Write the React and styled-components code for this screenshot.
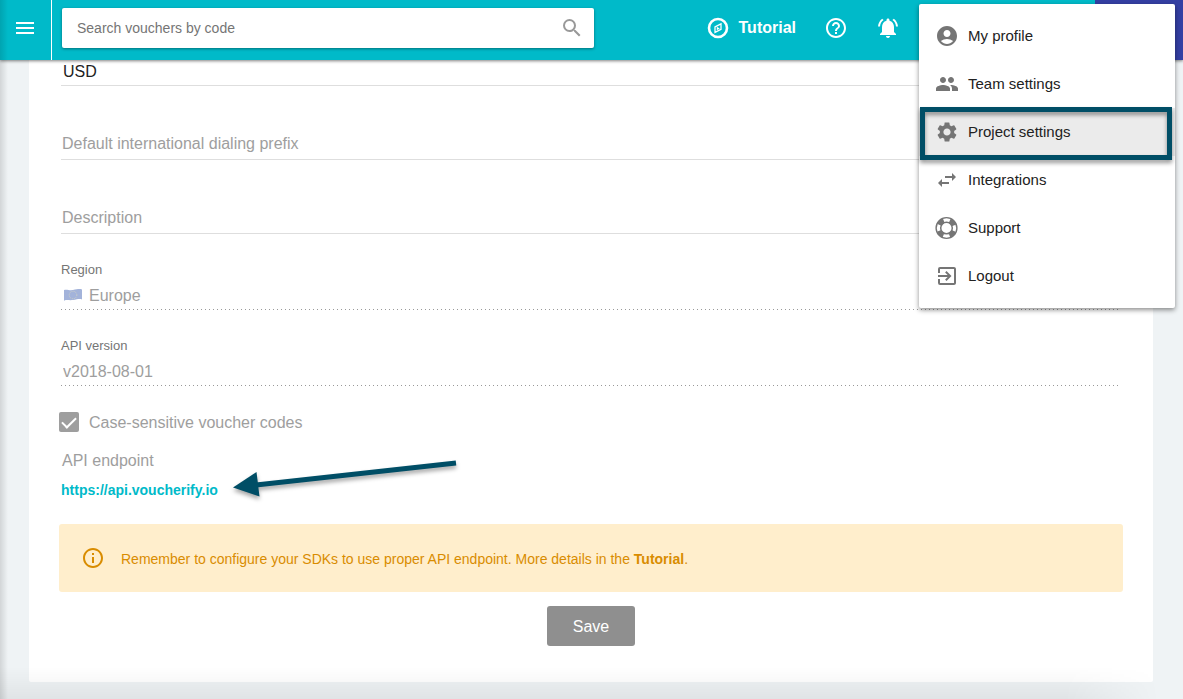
import React from 'react'
import styled, { createGlobalStyle } from 'styled-components'
import {
  MdMenu,
  MdSearch,
  MdHelpOutline,
  MdNotificationsActive,
  MdAccountCircle,
  MdPeople,
  MdSettings,
  MdSwapHoriz,
  MdExitToApp,
  MdInfoOutline,
} from 'react-icons/md'

const Colors = {
  TEAL: '#00bac9',
  INDIGO: '#343fa3',
  NAVY: '#004e66',
  PAGE: '#eff3f5',
  TEXT: '#222',
  MUTED: '#9e9e9e',
  LABEL: '#757575',
  LINE: '#dedede',
  AMBER: '#d98c00',
  AMBER_LIGHT: '#ffeecc',
}

const menuItems = [
  { label: 'My profile', icon: MdAccountCircle },
  { label: 'Team settings', icon: MdPeople },
  { label: 'Project settings', icon: MdSettings, active: true },
  { label: 'Integrations', icon: MdSwapHoriz },
  { label: 'Support', icon: LifeRing },
  { label: 'Logout', icon: MdExitToApp },
]

function LifeRing() {
  return (
    <svg width="24" height="24" viewBox="0 0 24 24" fill="none" stroke="currentColor" aria-hidden="true">
      <circle cx="11.500" cy="12" r="10.400" strokeWidth="1.400" />
      <circle cx="11.500" cy="12" r="5.800" strokeWidth="1.500" />
      <circle cx="11.500" cy="12" r="8" strokeWidth="5" strokeDasharray="6.400 6.166" strokeDashoffset="-3.083" />
    </svg>
  )
}

const Compass = () => (
  <svg width="22" height="22" viewBox="0 0 22 22" fill="none" stroke="currentColor" aria-hidden="true">
    <circle cx="11" cy="11" r="9" strokeWidth="2.600" />
    <path d="M14 6.800v5.600l-6 3V9.800z" strokeWidth="1.300" />
    <path d="M9.800 9.800l3 1.600-3 1.800z" fill="currentColor" stroke="none" />
  </svg>
)

const EuropeFlag = () => (
  <FlagSvg width="20" height="14" viewBox="0 0 20 14" aria-hidden="true">
    <path d="M1 2c3-1 5 .6 9 0s6-1.400 9-.6v10c-3-.8-5 .2-9 .7s-6-.6-9 .6z" fill="#a3b3da" />
    <circle cx="10" cy="7" r="3.800" fill="none" stroke="#cfd2c8" strokeWidth="1" strokeDasharray="1 1" />
  </FlagSvg>
)

const PointerArrow = () => (
  <ArrowSvg width="230" height="46" viewBox="0 0 230 46" aria-hidden="true">
    <path d="M24 27L224 5" stroke={Colors.NAVY} strokeWidth="5" />
    <path d="M1 29.500L24.500 14l3 24.500z" fill={Colors.NAVY} />
  </ArrowSvg>
)

const App = () => {
  return (
    <Page>
      <GlobalStyle />
      <Header>
        <MenuButton aria-label="Open menu"><MdMenu size={24} /></MenuButton>
        <SearchBox>
          <SearchInput type="text" placeholder="Search vouchers by code" aria-label="Search vouchers by code" />
          <MdSearch size={24} />
        </SearchBox>
        <Actions>
          <TutorialLink href="#tutorial"><Compass />Tutorial</TutorialLink>
          <IconButton aria-label="Help"><MdHelpOutline size={24} /></IconButton>
          <IconButton aria-label="Notifications"><MdNotificationsActive size={24} /></IconButton>
        </Actions>
        <AccountBlock />
      </Header>

      <Card>
        <Field $height={26}>
          <FieldInput id="currency" type="text" aria-label="Currency" defaultValue="USD" />
        </Field>
        <Field $height={74}>
          <FieldInput id="prefix" type="text" placeholder="Default international dialing prefix" aria-label="Default international dialing prefix" />
        </Field>
        <Field $height={74}>
          <FieldInput id="description" type="text" placeholder="Description" aria-label="Description" />
        </Field>
        <Field $height={76} $dotted>
          <FieldLabel htmlFor="region">Region</FieldLabel>
          <FieldValue>
            <EuropeFlag />
            <FieldInput id="region" type="text" defaultValue="Europe" disabled />
          </FieldValue>
        </Field>
        <Field $height={76} $dotted>
          <FieldLabel htmlFor="version">API version</FieldLabel>
          <FieldValue>
            <FieldInput id="version" type="text" defaultValue="v2018-08-01" disabled />
          </FieldValue>
        </Field>

        <CheckRow>
          <Checkbox type="checkbox" defaultChecked disabled />
          Case-sensitive voucher codes
        </CheckRow>
        <EndpointTitle>API endpoint</EndpointTitle>
        <EndpointRow>
          <EndpointLink href="https://api.voucherify.io">https://api.voucherify.io</EndpointLink>
          <PointerArrow />
        </EndpointRow>

        <Notice>
          <MdInfoOutline size={24} />
          <p>
            Remember to configure your SDKs to use proper API endpoint. More details in the <a href="#tutorial">Tutorial</a>.
          </p>
        </Notice>
        <SaveButton type="button">Save</SaveButton>
      </Card>

      <Menu>
        {menuItems.map(({ label, icon: Icon, active }) => (
          <MenuItem key={label} $active={active}>
            <Icon size={24} />
            <MenuLabel>{label}</MenuLabel>
            {active && <Highlight />}
          </MenuItem>
        ))}
      </Menu>
    </Page>
  )
}

const GlobalStyle = createGlobalStyle`
  * {
    box-sizing: border-box;
  }
  body {
    margin: 0;
    background-color: ${Colors.PAGE};
    color: ${Colors.TEXT};
    font-family: "Liberation Sans", Arial, sans-serif;
    font-size: 16px;
  }
  button, input {
    font-family: inherit;
  }
`

const Page = styled.div`
  position: relative;
  min-height: 100vh;
  padding-bottom: 17px;

  &::before {
    content: '';
    position: absolute;
    z-index: 3;
    inset: 0 auto 0 0;
    width: 8px;
    background: linear-gradient(to right, rgba(0, 0, 0, 0.12), transparent);
    pointer-events: none;
  }

  &::after {
    content: '';
    position: absolute;
    inset: auto 0 0 0;
    height: 32px;
    background: linear-gradient(to bottom, transparent, rgba(0, 0, 0, 0.06));
    mask-image: linear-gradient(to right, #000 90%, transparent 98%);
    pointer-events: none;
  }
`

const Header = styled.header`
  position: relative;
  z-index: 1;
  display: flex;
  align-items: stretch;
  height: 60px;
  color: #fff;
  background-color: ${Colors.TEAL};
  box-shadow: 0 1px 3px rgba(0, 0, 0, 0.5);
`

const MenuButton = styled.button`
  display: flex;
  align-items: center;
  justify-content: center;
  width: 52px;
  padding: 0 2px 4px 0;
  color: inherit;
  background: none;
  border: none;
  border-right: 1px solid #fff;
`

const SearchBox = styled.div`
  display: flex;
  align-items: center;
  width: 45%;
  height: 40px;
  margin: 8px 0 0 10px;
  padding: 0 10px 0 15px;
  color: #999;
  background-color: #fff;
  border-radius: 2px;
  box-shadow: 0 1px 3px rgba(0, 0, 0, 0.4);
`

const SearchInput = styled.input`
  flex: 1;
  min-width: 0;
  padding: 0;
  font-size: 14px;
  border: none;
  outline: none;

  &::placeholder {
    color: ${Colors.LABEL};
  }
`

const Actions = styled.div`
  display: flex;
  align-items: center;
  gap: 28px;
  margin-left: auto;
  padding: 0 195px 4px 0;
`

const TutorialLink = styled.a`
  display: flex;
  align-items: center;
  gap: 10px;
  color: inherit;
  font-weight: bold;
  text-decoration: none;
`

const IconButton = styled.button`
  display: flex;
  padding: 0;
  color: inherit;
  background: none;
  border: none;
`

const AccountBlock = styled.div`
  width: 88px;
  background-color: ${Colors.INDIGO};
`

const Card = styled.main`
  display: flex;
  flex-direction: column;
  margin: 0 30px 0 29px;
  padding: 0 30px 36px;
  background-color: #fff;
  border-radius: 0 0 2px 2px;
`

const Field = styled.div`
  display: flex;
  flex-direction: column;
  justify-content: flex-end;
  height: ${props => props.$height}px;
  margin: 0 5px 0 2px;
  padding-bottom: ${props => props.$dotted ? 4 : 3}px;
  border-bottom: ${props => props.$dotted ? 'none' : `1px solid ${Colors.LINE}`};
  background: ${props => props.$dotted ? 'linear-gradient(to right, #999 1px, transparent 1px) 0 100% / 4px 1px repeat-x' : 'none'};
`

const FieldLabel = styled.label`
  margin-bottom: 8px;
  color: ${Colors.LABEL};
  font-size: 13px;
  line-height: 16px;
`

const FieldInput = styled.input`
  width: 100%;
  min-width: 0;
  height: 20px;
  padding: 0 2px;
  color: ${Colors.TEXT};
  font-size: 16px;
  background: none;
  border: none;
  outline: none;

  &::placeholder, &:disabled {
    color: ${Colors.MUTED};
  }

  &:placeholder-shown {
    margin-bottom: 2px;
    padding: 0 1px;
  }
`

const FieldValue = styled.div`
  display: flex;
  align-items: center;
`

const FlagSvg = styled.svg`
  flex: none;
  margin: 0 4px 2px 2px;
`

const CheckRow = styled.label`
  display: flex;
  align-items: flex-start;
  gap: 10px;
  margin-top: 26px;
  color: ${Colors.MUTED};
  line-height: 22px;
`

const Checkbox = styled.input`
  appearance: none;
  display: flex;
  justify-content: center;
  width: 20px;
  height: 20px;
  margin: 0;
  border-radius: 2px;
  background-color: ${Colors.MUTED};

  &:checked::before {
    content: '';
    width: 6px;
    height: 12px;
    margin-top: 2px;
    border: solid #fff;
    border-width: 0 2px 2px 0;
    transform: rotate(45deg);
  }
`

const EndpointTitle = styled.div`
  margin: 17px 0 0 3px;
  color: ${Colors.MUTED};
  line-height: 20px;
`

const EndpointRow = styled.div`
  position: relative;
  display: flex;
  align-items: center;
  height: 20px;
  margin: 9px 0 24px 2px;
`

const EndpointLink = styled.a`
  color: ${Colors.TEAL};
  font-size: 14px;
  font-weight: bold;
  text-decoration: none;
`

const ArrowSvg = styled.svg`
  position: absolute;
  left: 171px;
  bottom: -4px;
  filter: drop-shadow(0 3px 2px rgba(0, 0, 0, 0.35));
`

const Notice = styled.div`
  display: flex;
  align-items: center;
  gap: 16px;
  min-height: 68px;
  padding: 0 22px;
  color: ${Colors.AMBER};
  font-size: 14px;
  background-color: ${Colors.AMBER_LIGHT};
  border-radius: 3px;

  p {
    margin: 2px 0 0;
  }
  a {
    color: inherit;
    font-weight: bold;
    text-decoration: none;
  }
`

const SaveButton = styled.button`
  align-self: center;
  width: 88px;
  height: 40px;
  margin-top: 14px;
  padding: 2px 0 0;
  color: #fff;
  font-size: 16px;
  background-color: #8f8f8f;
  border: none;
  border-radius: 3px;
`

const Menu = styled.nav`
  position: absolute;
  z-index: 2;
  top: 4px;
  right: 8px;
  width: 256px;
  padding: 8px 0;
  background-color: #fff;
  border-radius: 2px;
  box-shadow: 0 2px 5px rgba(0, 0, 0, 0.45);
`

const MenuItem = styled.button`
  position: relative;
  display: flex;
  align-items: center;
  gap: 9px;
  width: 100%;
  height: 48px;
  padding: 0 16px;
  color: ${Colors.TEXT};
  font-size: 15px;
  background-color: ${props => props.$active ? '#ebebeb' : 'transparent'};
  border: none;

  svg {
    color: ${Colors.LABEL};
  }
`

const MenuLabel = styled.span`
  padding-bottom: 2px;
`

const Highlight = styled.span`
  position: absolute;
  inset: -1px 3px -4px 1px;
  border: 5px solid ${Colors.NAVY};
  filter: drop-shadow(0 3px 2px rgba(0, 0, 0, 0.4));
`

export default App
